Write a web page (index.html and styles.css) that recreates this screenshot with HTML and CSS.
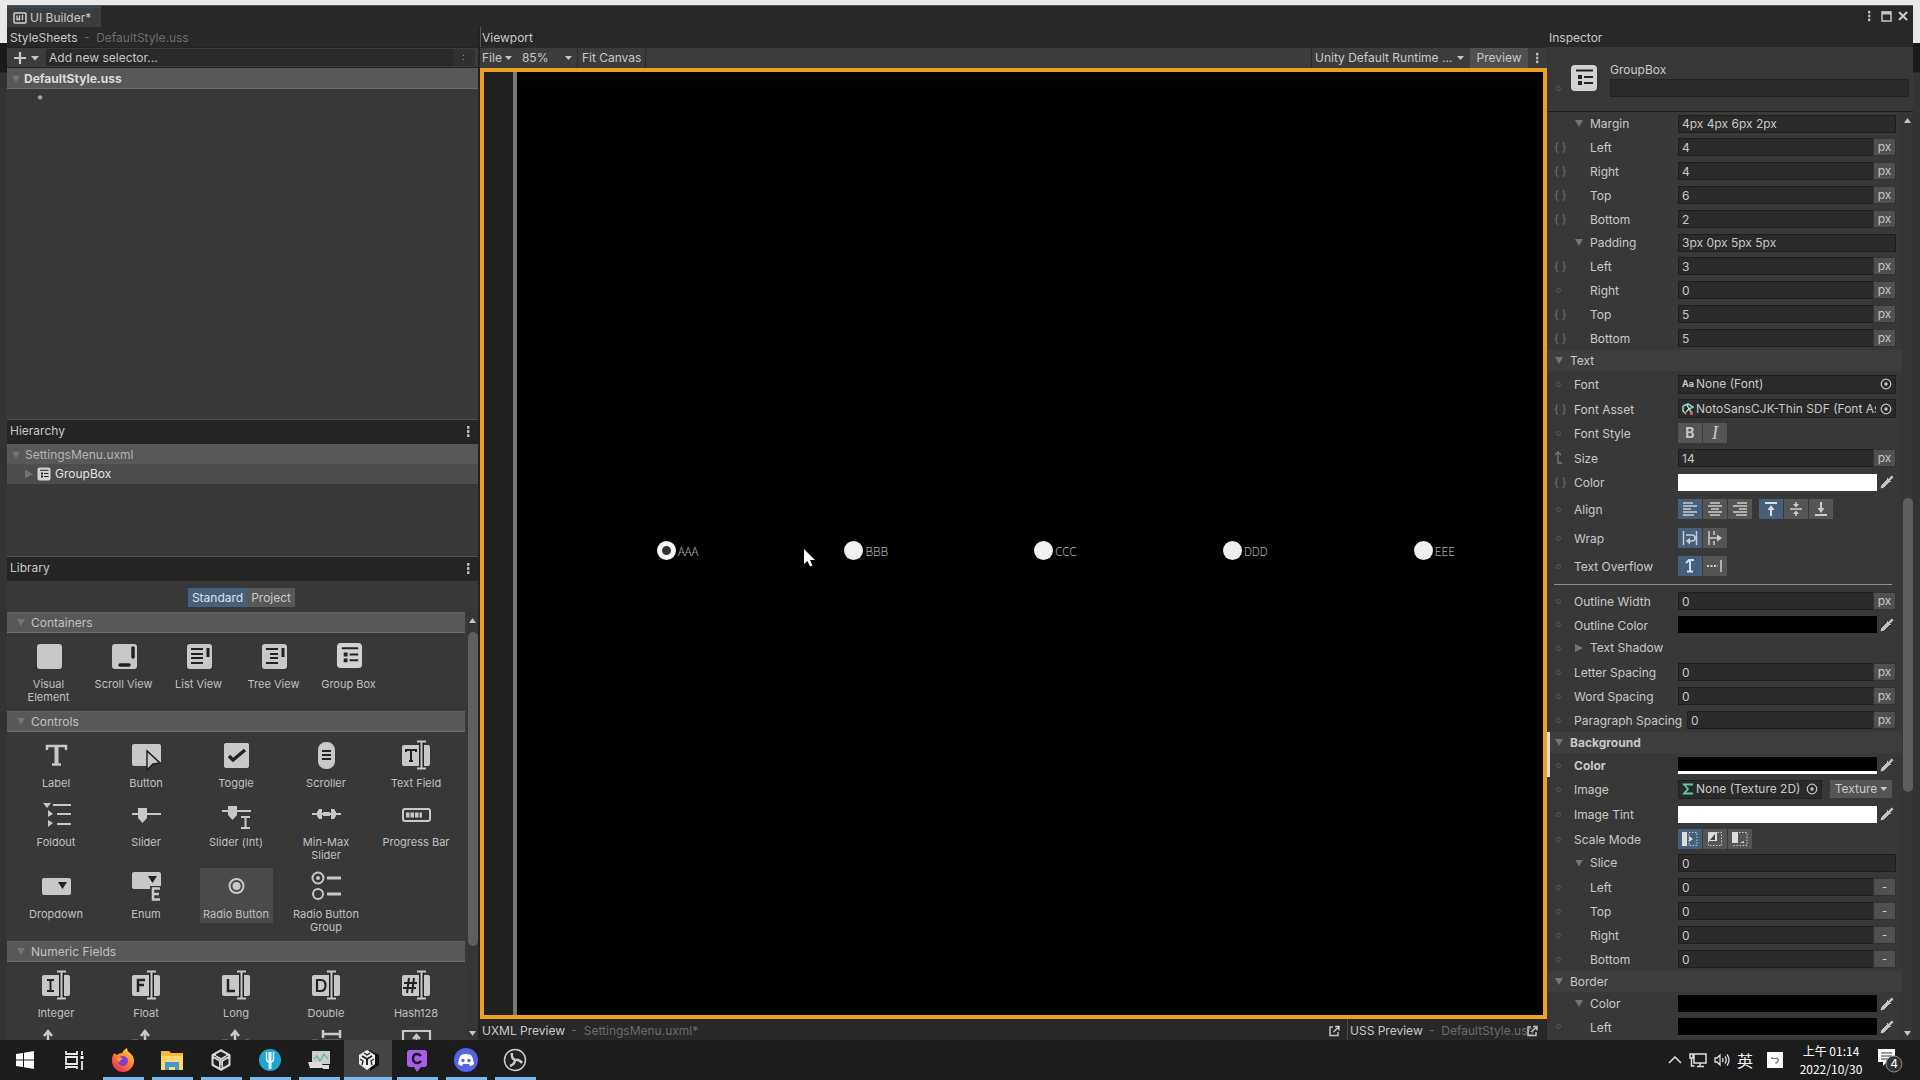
FILE: index.html
```
<!DOCTYPE html>
<html lang="en">
<head>
<meta charset="utf-8">
<title>UI Builder</title>
<link rel="stylesheet" href="styles.css">
</head>
<body>
<svg class="defs" aria-hidden="true">
  <symbol id="i-group" viewBox="0 0 28 28"><rect x="1" y="1" width="26" height="26" rx="4" fill="#d2d2d2"/><path d="M6 6.500h17M14 13h9M14 19h9" stroke="#222" stroke-width="2"/><path d="M8 11h4v4H8zM8 17h4v4H8z" fill="#222"/></symbol>
  <symbol id="i-field" viewBox="0 0 32 32"><path d="M4 6h15v21H4a2 2 0 0 1-2-2V8a2 2 0 0 1 2-2zM24 6h4a2 2 0 0 1 2 2v17a2 2 0 0 1-2 2h-4z" fill="#c8c8c8"/><path d="M21.500 2v28" stroke="#222" stroke-width="5"/><path d="M17 2.500h9M17 29.500h9M21.500 2v28" stroke="#c8c8c8" stroke-width="2" fill="none"/></symbol>
  <symbol id="i-dots" viewBox="0 0 4 14"><path d="M1 1h2.500v3H1zM1 5.500h2.500v3H1zM1 10h2.500v3H1z" fill="#c4c4c4"/></symbol>
  <symbol id="i-pick" viewBox="0 0 14 14"><path d="M1 13l1-3 6-6 2 2-6 6zM7 3l4 4M9 4l2-2.500a1 1 0 0 1 1.500 1.500L10 5z" fill="#c4c4c4" stroke="#c4c4c4"/></symbol>
  <symbol id="i-target" viewBox="0 0 12 12"><circle cx="6" cy="6" r="4.800" fill="none" stroke="#c4c4c4" stroke-width="1.200"/><circle cx="6" cy="6" r="1.700" fill="#c4c4c4"/></symbol>
  <symbol id="i-open" viewBox="0 0 12 12"><path d="M5 2H2v8.500h8V7M7 1.500h4V5.500M11 1.500L5.500 7" fill="none" stroke="#c4c4c4" stroke-width="1.500"/></symbol>
  <symbol id="i-unity" viewBox="0 0 24 24"><path d="M12 1l9.500 5.500v11L12 23l-9.500-5.500v-11z" fill="#d8d8d8"/><path d="M12 12V20M12 12l7-4M12 12L5 8M12 4l5 2.800-5 2.700-5-2.700zM5 11v5l4.500 2.600v-5zM19 11v5l-4.500 2.600v-5z" fill="#222" stroke="#222" stroke-width="1"/><path d="M12 11.500V17M12 11.500l5-3M12 11.500l-5-3" stroke="#ddd" stroke-width="1.300"/></symbol>
</svg>

<main class="window">
  <header class="tabbar">
    <button class="tab"><svg width="14" height="12" viewBox="0 0 14 12"><rect x="1" y="1" width="12" height="10" rx="1" fill="none" stroke="#d0d0d0" stroke-width="1.500"/><path d="M4 3.500v4h2.500v-4M9.500 3v5" fill="none" stroke="#d0d0d0" stroke-width="1.300"/></svg>UI Builder*</button>
    <div class="winbtns">
      <button aria-label="Menu"><svg width="4" height="12"><use href="#i-dots"/></svg></button>
      <button aria-label="Maximize"><svg width="11" height="11" viewBox="0 0 11 11"><path d="M1 1h9v9H1z" fill="none" stroke="#c4c4c4" stroke-width="1.500"/><path d="M1 2h9" stroke="#c4c4c4" stroke-width="3"/></svg></button>
      <button aria-label="Close"><svg width="10" height="10" viewBox="0 0 10 10"><path d="M1 1l8 8M9 1L1 9" stroke="#d0d0d0" stroke-width="1.800"/></svg></button>
    </div>
  </header>

  <div class="panes">
    <aside class="left">
      <h2 class="head">StyleSheets <span class="sub">-&nbsp; DefaultStyle.uss</span></h2>
      <div class="selbar">
        <button class="add" aria-label="Add"><svg width="26" height="14" viewBox="0 0 26 14"><path d="M7 1v12M1 7h12" stroke="#c8c8c8" stroke-width="2.200"/><path d="M18 5h8l-4 4.500z" fill="#c8c8c8"/></svg></button>
        <input class="selinput" aria-label="Selector" value="Add new selector...">
        <button class="selmore" aria-label="More"><svg width="2" height="8" viewBox="0 0 2 8"><path d="M0 1h1v1H0zM0 5h1v1H0z" fill="#888"/></svg></button>
      </div>
      <div class="sheets">
        <div class="row-file"><i class="tri"></i><b>DefaultStyle.uss</b></div>
        <div class="star">*</div>
      </div>
      <h2 class="head tall lined">Hierarchy <button class="more" aria-label="More"><svg width="4" height="13"><use href="#i-dots"/></svg></button></h2>
      <div class="tree">
        <div class="row-file faded"><i class="tri"></i>SettingsMenu.uxml</div>
        <div class="row-node"><i class="tri closed"></i><svg width="14" height="14"><use href="#i-group"/></svg>GroupBox</div>
      </div>
      <h2 class="head tall lined">Library <button class="more" aria-label="More"><svg width="4" height="13"><use href="#i-dots"/></svg></button></h2>
      <div class="modes"><button class="on">Standard</button><button>Project</button></div>
      <div class="library">
        <div class="libscroll">
          <h3 class="cat"><i class="tri"></i>Containers</h3>
          <div class="items tight">
            <div class="item"><svg viewBox="0 0 32 32"><rect x="4" y="4" width="25" height="25" rx="3" fill="#c8c8c8"/></svg><span>Visual Element</span></div>
            <div class="item"><svg viewBox="0 0 32 32"><rect x="4" y="4" width="25" height="25" rx="3" fill="#c8c8c8"/><path d="M25 8v9M12 25h9" stroke="#222" stroke-width="3.500" stroke-linecap="round"/></svg><span>Scroll View</span></div>
            <div class="item"><svg viewBox="0 0 32 32"><rect x="4" y="4" width="25" height="25" rx="3" fill="#c8c8c8"/><path d="M8 9h12M8 14h12M8 18h12M8 23h12" stroke="#222" stroke-width="2"/><path d="M25 8v9" stroke="#222" stroke-width="3"/></svg><span>List View</span></div>
            <div class="item"><svg viewBox="0 0 32 32"><rect x="4" y="4" width="25" height="25" rx="3" fill="#c8c8c8"/><path d="M8 9h12M12 14h8M12 18h8M8 23h12" stroke="#222" stroke-width="2"/><path d="M25 8v9" stroke="#222" stroke-width="3"/></svg><span>Tree View</span></div>
            <div class="item"><svg viewBox="0 0 32 32"><use href="#i-group" x="3" y="2" width="27" height="27"/></svg><span>Group Box</span></div>
          </div>
          <h3 class="cat"><i class="tri"></i>Controls</h3>
          <div class="items">
            <div class="item"><svg viewBox="0 0 32 32"><path d="M7 11V7h19v4M16.500 7v18M12 25.500h9" fill="none" stroke="#c8c8c8" stroke-width="2.500"/><path d="M16.500 6v20" stroke="#c8c8c8" stroke-width="4"/></svg><span>Label</span></div>
            <div class="item"><svg viewBox="0 0 32 32"><rect x="2" y="5" width="29" height="22" rx="2" fill="#c8c8c8"/><path d="M17 11l14 13v5H17z" fill="#383838"/><path d="M17 12l13 12-7 1-6 6z" fill="#c8c8c8" stroke="#222" stroke-width="1.500"/></svg><span>Button</span></div>
            <div class="item"><svg viewBox="0 0 32 32"><rect x="4" y="4" width="25" height="25" rx="2" fill="#c8c8c8"/><path d="M9 17l4 4L25 11" fill="none" stroke="#222" stroke-width="3.500"/></svg><span>Toggle</span></div>
            <div class="item"><svg viewBox="0 0 32 32"><rect x="8" y="3" width="17" height="27" rx="8" fill="#c8c8c8"/><path d="M12 12h9M12 16h9M12 20h9" stroke="#222" stroke-width="1.800"/></svg><span>Scroller</span></div>
            <div class="item"><svg viewBox="0 0 32 32"><use href="#i-field"/><path d="M6 13v-2h10v2M11 11v11M9 22h4" fill="none" stroke="#222" stroke-width="2"/></svg><span>Text Field</span></div>
            <div class="item"><svg viewBox="0 0 32 32"><path d="M3 5h8l-4 5zM8 12l5 4-5 3zM8 22l5 3-5 4z" fill="#c8c8c8"/><path d="M13 7h18M17 16h14M17 26h14" stroke="#c8c8c8" stroke-width="2"/></svg><span>Foldout</span></div>
            <div class="item"><svg viewBox="0 0 32 32"><path d="M2 16h29" stroke="#c8c8c8" stroke-width="2"/><path d="M8 10h9v10l-4.500 5L8 20z" fill="#c8c8c8"/></svg><span>Slider</span></div>
            <div class="item"><svg viewBox="0 0 32 32"><path d="M2 13h29" stroke="#c8c8c8" stroke-width="2"/><path d="M8 8h9v9l-4.500 5L8 17zM21 18h9v2h-3.500v9H30v2h-9v-2h3.500v-9H21z" fill="#c8c8c8"/></svg><span>Slider (Int)</span></div>
            <div class="item"><svg viewBox="0 0 32 32"><path d="M2 16h29" stroke="#c8c8c8" stroke-width="2"/><path d="M12 11v10h-3l-2-3v-4l2-3zM21 11v10h3l2-3v-4l-2-3zM13 14h7v4h-7z" fill="#c8c8c8"/></svg><span>Min-Max Slider</span></div>
            <div class="item"><svg viewBox="0 0 32 32"><rect x="3" y="11" width="27" height="12" rx="2" fill="none" stroke="#c8c8c8" stroke-width="2"/><path d="M6 17h16" stroke="#c8c8c8" stroke-width="5" stroke-dasharray="3.500 1"/></svg><span>Progress Bar</span></div>
            <div class="item"><svg viewBox="0 0 32 32"><rect x="2" y="8" width="29" height="17" rx="2" fill="#c8c8c8"/><path d="M18 12h9l-4.500 7z" fill="#222"/></svg><span>Dropdown</span></div>
            <div class="item"><svg viewBox="0 0 32 32"><rect x="2" y="2" width="29" height="17" rx="2" fill="#c8c8c8"/><path d="M18 6h9l-4.500 7z" fill="#222"/><path d="M20 16h12v15H20z" fill="#383838"/><path d="M30 18.500h-7v11h7M23 24h6" fill="none" stroke="#c8c8c8" stroke-width="2.500"/></svg><span>Enum</span></div>
            <div class="item sel"><svg viewBox="0 0 32 32"><circle cx="16.500" cy="16" r="7" fill="none" stroke="#c8c8c8" stroke-width="2"/><circle cx="16.500" cy="16" r="4" fill="#c8c8c8"/></svg><span>Radio Button</span></div>
            <div class="item"><svg viewBox="0 0 32 32"><circle cx="8" cy="8" r="5.500" fill="none" stroke="#c8c8c8" stroke-width="2"/><circle cx="8" cy="8" r="2" fill="#c8c8c8"/><circle cx="8" cy="24" r="5" fill="none" stroke="#c8c8c8" stroke-width="2"/><path d="M17 8h14M17 24h14" stroke="#c8c8c8" stroke-width="3"/></svg><span>Radio Button Group</span></div>
          </div>
          <h3 class="cat"><i class="tri"></i>Numeric Fields</h3>
          <div class="items">
            <div class="item"><svg viewBox="0 0 32 32"><use href="#i-field"/><path d="M7 11h7M7 22h7M10.500 11v11" stroke="#222" stroke-width="2"/></svg><span>Integer</span></div>
            <div class="item"><svg viewBox="0 0 32 32"><use href="#i-field"/><path d="M15 11H8v12M8 16h6" fill="none" stroke="#222" stroke-width="2.500"/></svg><span>Float</span></div>
            <div class="item"><svg viewBox="0 0 32 32"><use href="#i-field"/><path d="M8 10v12h7" fill="none" stroke="#222" stroke-width="2.500"/></svg><span>Long</span></div>
            <div class="item"><svg viewBox="0 0 32 32"><use href="#i-field"/><path d="M7 11h4q4.500 0 4.500 5.500T11 22H7z" fill="none" stroke="#222" stroke-width="2.200"/></svg><span>Double</span></div>
            <div class="item"><svg viewBox="0 0 32 32"><use href="#i-field"/><path d="M9 9L7 24M14 9l-2 15M4 14h13M3 19h13" stroke="#222" stroke-width="2"/></svg><span>Hash128</span></div>
            <div class="item"><svg viewBox="0 0 32 32"><path d="M8 3v14M4 8l4-5 4 5" fill="none" stroke="#c8c8c8" stroke-width="2.500"/></svg></div>
            <div class="item"><svg viewBox="0 0 32 32"><path d="M15 3v14M11 8l4-5 4 5M2 13h6" fill="none" stroke="#c8c8c8" stroke-width="2.500"/></svg></div>
            <div class="item"><svg viewBox="0 0 32 32"><path d="M15 3v14M11 8l4-5 4 5M2 13h6M25 13h4" fill="none" stroke="#c8c8c8" stroke-width="2.500"/></svg></div>
            <div class="item"><svg viewBox="0 0 32 32"><path d="M13 2v8M30 2v8M13 6h17M2 13h6M13 13h17v9H13z" fill="none" stroke="#c8c8c8" stroke-width="2.500"/></svg></div>
            <div class="item"><svg viewBox="0 0 32 32"><path d="M3 3h27v20H3zM16.500 17V8M13 11l3.500-4 3.500 4M8 13h2M23 13h2" fill="none" stroke="#c8c8c8" stroke-width="2.200"/></svg></div>
          </div>
        </div>
        <div class="bar"><i class="up"></i><i class="thumb lib"></i><i class="down"></i></div>
      </div>
    </aside>

    <section class="center">
      <h2 class="head">Viewport</h2>
      <div class="toolbar">
        <button>File<i class="dd"></i></button>
        <button class="zoom">85%<i class="dd"></i></button>
        <button class="fit">Fit Canvas</button>
        <button class="theme">Unity Default Runtime ...<i class="dd"></i></button>
        <button class="preview">Preview</button>
        <button class="tmore" aria-label="More"><svg width="4" height="12"><use href="#i-dots"/></svg></button>
      </div>
      <div class="viewport">
        <div class="canvas">
          <label><input type="radio" name="g" checked>AAA</label>
          <label><input type="radio" name="g">BBB</label>
          <label><input type="radio" name="g">CCC</label>
          <label><input type="radio" name="g">DDD</label>
          <label><input type="radio" name="g">EEE</label>
        </div>
        <svg class="cursor" width="12" height="18" viewBox="0 0 12 18"><path d="M0 0v15l3.500-3 2.500 5.500 2.500-1L6 11h5z" fill="#fff"/></svg>
      </div>
      <div class="previews">
        <div class="pv grow">UXML Preview <span class="sub">-&nbsp; SettingsMenu.uxml*</span><button aria-label="Open"><svg width="12" height="12"><use href="#i-open"/></svg></button></div>
        <div class="pv uss">USS Preview <span class="sub">-&nbsp; DefaultStyle.uss</span><button aria-label="Open"><svg width="12" height="12"><use href="#i-open"/></svg></button></div>
      </div>
    </section>

    <aside class="inspector">
      <h2 class="head">Inspector</h2>
      <div class="ident">
        <i class="dot"></i>
        <svg width="28" height="28"><use href="#i-group"/></svg>
        <div class="idcol"><label for="nm">GroupBox</label><input id="nm" value=""></div>
      </div>
      <div class="inspbody">
        <div class="props">
          <div class="row s23 n2"><i class="m"></i><i class="tri"></i><label for="f1">Margin</label><input class="fld" id="f1" value="4px 4px 6px 2px"></div>
          <div class="row n2"><i class="m">{ }</i><label for="f2">Left</label><input class="fld" id="f2" value="4"><button class="unit">px</button></div>
          <div class="row n2"><i class="m">{ }</i><label for="f3">Right</label><input class="fld" id="f3" value="4"><button class="unit">px</button></div>
          <div class="row n2"><i class="m">{ }</i><label for="f4">Top</label><input class="fld" id="f4" value="6"><button class="unit">px</button></div>
          <div class="row n2"><i class="m">{ }</i><label for="f5">Bottom</label><input class="fld" id="f5" value="2"><button class="unit">px</button></div>
          <div class="row s23 n2"><i class="m"></i><i class="tri"></i><label for="f6">Padding</label><input class="fld" id="f6" value="3px 0px 5px 5px"></div>
          <div class="row n2"><i class="m">{ }</i><label for="f7">Left</label><input class="fld" id="f7" value="3"><button class="unit">px</button></div>
          <div class="row n2"><i class="m o"></i><label for="f8">Right</label><input class="fld" id="f8" value="0"><button class="unit">px</button></div>
          <div class="row n2"><i class="m">{ }</i><label for="f9">Top</label><input class="fld" id="f9" value="5"><button class="unit">px</button></div>
          <div class="row n2"><i class="m">{ }</i><label for="f10">Bottom</label><input class="fld" id="f10" value="5"><button class="unit">px</button></div>
          <h3 class="sec"><i class="tri"></i>Text</h3>
          <div class="row s26"><i class="m o"></i><label for="f11">Font</label><div class="obj"><b class="aa">Aa</b><input id="f11" value="None (Font)"><button aria-label="Pick"><svg width="12" height="12"><use href="#i-target"/></svg></button></div></div>
          <div class="row s23"><i class="m">{ }</i><label for="f12">Font Asset</label><div class="obj"><svg width="12" height="12" viewBox="0 0 12 12"><path d="M1 3l5-2 5 3-4 2 3 4M1 3v5l3 3" fill="none" stroke="#7fd6c0" stroke-width="1.600"/><path d="M5 2l2 4-3 3" fill="none" stroke="#ddd" stroke-width="1.200"/><path d="M8 9h3v3H8z" fill="#e05050"/></svg><input id="f12" value="NotoSansCJK-Thin SDF (Font Asset)"><button aria-label="Pick"><svg width="12" height="12"><use href="#i-target"/></svg></button></div></div>
          <div class="row s26"><i class="m o"></i><span class="lb">Font Style</span><div class="seg"><button class="bold">B</button><button class="ital">I</button></div></div>
          <div class="row"><i class="m"><svg width="9" height="14" viewBox="0 0 9 14"><path d="M1 4l3-3 3 3M4 1v11h4" fill="none" stroke="#777" stroke-width="1.300"/></svg></i><label for="f13">Size</label><input class="fld" id="f13" value="14"><button class="unit">px</button></div>
          <div class="row"><i class="m">{ }</i><span class="lb">Color</span><button class="color white" aria-label="Color"></button><button class="eye" aria-label="Pick color"><svg width="14" height="14"><use href="#i-pick"/></svg></button></div>
          <div class="row s30"><i class="m o"></i><span class="lb">Align</span>
            <div class="seg">
              <button class="on" aria-label="Left"><svg viewBox="0 0 16 16"><path d="M1 2h10M1 5h14M1 8h8M1 11h14M1 14h11" stroke="#ccc" stroke-width="1.300"/></svg></button>
              <button aria-label="Center"><svg viewBox="0 0 16 16"><path d="M3 2h10M1 5h14M4 8h8M1 11h14M3 14h10" stroke="#ccc" stroke-width="1.300"/></svg></button>
              <button aria-label="Right"><svg viewBox="0 0 16 16"><path d="M5 2h10M1 5h14M7 8h8M1 11h14M4 14h11" stroke="#ccc" stroke-width="1.300"/></svg></button>
            </div>
            <div class="seg second">
              <button class="on" aria-label="Top"><svg viewBox="0 0 16 16"><path d="M2 2h12M8 15V7" stroke="#ddd" stroke-width="2"/><path d="M4.500 9L8 4l3.500 5z" fill="#ddd"/></svg></button>
              <button aria-label="Middle"><svg viewBox="0 0 16 16"><path d="M2 8h12M8 1v3M8 12v3" stroke="#ccc" stroke-width="1.500"/><path d="M5 3h6L8 6.500zM5 13h6L8 9.500z" fill="#ccc"/></svg></button>
              <button aria-label="Bottom"><svg viewBox="0 0 16 16"><path d="M2 14h12M8 1v7" stroke="#ccc" stroke-width="2"/><path d="M4.500 7L8 12l3.500-5z" fill="#ccc"/></svg></button>
            </div>
          </div>
          <div class="row s28"><i class="m o"></i><span class="lb">Wrap</span><div class="seg">
            <button class="on" aria-label="Wrap"><svg viewBox="0 0 16 16"><path d="M1.500 1v14M14.500 1v14M4 5h6a2.500 2.500 0 0 1 0 6H6" fill="none" stroke="#ccc" stroke-width="1.500"/><path d="M8 7.500v7L4 11z" fill="#ccc"/></svg></button>
            <button aria-label="No wrap"><svg viewBox="0 0 16 16"><path d="M2 1v14M7 1v4M7 11v4M3 8h9" stroke="#ccc" stroke-width="1.500"/><path d="M10 4.500L15 8l-5 3.500z" fill="#ccc"/></svg></button></div></div>
          <div class="row s28"><i class="m o"></i><span class="lb">Text Overflow</span><div class="seg">
            <button class="on" aria-label="Clip"><svg viewBox="0 0 16 16"><path d="M4 5l3-3h5M8 2v11M5 13.500h6" fill="none" stroke="#c8e0f0" stroke-width="2"/></svg></button>
            <button aria-label="Ellipsis"><svg viewBox="0 0 16 16"><path d="M0 8h11" stroke="#ccc" stroke-width="2" stroke-dasharray="2 1.500"/><path d="M14 2v12" stroke="#ccc" stroke-width="1.500"/></svg></button></div></div>
          <hr>
          <div class="row"><i class="m o"></i><label for="f14">Outline Width</label><input class="fld" id="f14" value="0"><button class="unit">px</button></div>
          <div class="row s23"><i class="m o"></i><span class="lb">Outline Color</span><button class="color" aria-label="Outline color"></button><button class="eye" aria-label="Pick color"><svg width="14" height="14"><use href="#i-pick"/></svg></button></div>
          <div class="row n2 flat"><i class="m o"></i><i class="tri closed"></i><span class="lb">Text Shadow</span></div>
          <div class="row"><i class="m o"></i><label for="f15">Letter Spacing</label><input class="fld" id="f15" value="0"><button class="unit">px</button></div>
          <div class="row"><i class="m o"></i><label for="f16">Word Spacing</label><input class="fld" id="f16" value="0"><button class="unit">px</button></div>
          <div class="row long"><i class="m o"></i><label for="f17">Paragraph Spacing</label><input class="fld" id="f17" value="0"><button class="unit">px</button></div>
          <div class="changed">
            <h3 class="sec"><i class="tri"></i><b>Background</b></h3>
            <div class="row"><i class="m o"></i><b class="lb">Color</b><button class="color alpha" aria-label="Background color"></button><button class="eye" aria-label="Pick color"><svg width="14" height="14"><use href="#i-pick"/></svg></button></div>
          </div>
          <div class="row"><i class="m o"></i><label for="f18">Image</label><div class="obj short"><svg width="12" height="12" viewBox="0 0 12 12"><path d="M11 1.500H2l4 4.500-4 4.500h9" fill="none" stroke="#5fc9a0" stroke-width="1.800"/></svg><input id="f18" value="None (Texture 2D)"><button aria-label="Pick"><svg width="12" height="12"><use href="#i-target"/></svg></button></div><button class="texture">Texture<i class="dd"></i></button></div>
          <div class="row s26"><i class="m o"></i><span class="lb">Image Tint</span><button class="color white" aria-label="Tint"></button><button class="eye" aria-label="Pick color"><svg width="14" height="14"><use href="#i-pick"/></svg></button></div>
          <div class="row"><i class="m o"></i><span class="lb">Scale Mode</span><div class="seg">
            <button class="on" aria-label="Stretch"><svg viewBox="0 0 16 16"><path d="M0 1h5v14H0z" fill="#ddd"/><path d="M7 1.500h8v13H7z" fill="none" stroke="#ccc" stroke-dasharray="1.500 1.500"/><path d="M7 5l4 3-4 3z" fill="#ddd"/></svg></button>
            <button aria-label="Crop"><svg viewBox="0 0 16 16"><path d="M1 1h9v9H1z" fill="#ddd"/><path d="M3 9l5-6v6z" fill="#444"/><path d="M1.500 1.500h13v13h-13z" fill="none" stroke="#ccc" stroke-dasharray="1.500 1.500"/></svg></button>
            <button aria-label="Fit"><svg viewBox="0 0 16 16"><path d="M0 1h6v11H0z" fill="#ddd"/><path d="M7 1.500h8v13H1" fill="none" stroke="#ccc" stroke-dasharray="1.500 1.500"/><path d="M8 12h4v-2z" fill="#ddd"/></svg></button></div></div>
          <div class="row n2"><i class="m"></i><i class="tri"></i><label for="f19">Slice</label><input class="fld" id="f19" value="0"></div>
          <div class="row n2"><i class="m o"></i><label for="f20">Left</label><input class="fld" id="f20" value="0"><button class="unit">-</button></div>
          <div class="row n2"><i class="m o"></i><label for="f21">Top</label><input class="fld" id="f21" value="0"><button class="unit">-</button></div>
          <div class="row n2"><i class="m o"></i><label for="f22">Right</label><input class="fld" id="f22" value="0"><button class="unit">-</button></div>
          <div class="row n2"><i class="m o"></i><label for="f23">Bottom</label><input class="fld" id="f23" value="0"><button class="unit">-</button></div>
          <h3 class="sec"><i class="tri"></i>Border</h3>
          <div class="row s23 n2"><i class="m"></i><i class="tri"></i><span class="lb">Color</span><button class="color" aria-label="Border color"></button><button class="eye" aria-label="Pick color"><svg width="14" height="14"><use href="#i-pick"/></svg></button></div>
          <div class="row s23 n2"><i class="m o"></i><span class="lb">Left</span><button class="color" aria-label="Border left color"></button><button class="eye" aria-label="Pick color"><svg width="14" height="14"><use href="#i-pick"/></svg></button></div>
        </div>
        <div class="bar"><i class="up"></i><i class="thumb insp"></i><i class="down"></i></div>
      </div>
    </aside>
  </div>
</main>

<footer class="taskbar">
  <button class="app" aria-label="Start"><svg viewBox="0 0 24 24"><path d="M3 6l7-1v6.500H3zM11 4.800L21 3v8.500H11zM3 12.500h7V19l-7-1zM11 12.500h10V21l-10-1.800z" fill="#fff"/></svg></button>
  <button class="app" aria-label="Task view"><svg viewBox="0 0 24 24"><path d="M4 9h11v7H4zM4 3v3h11V3M4 21v-2h11v2M20 3v4M20 13v9" fill="none" stroke="#e8e8e8" stroke-width="1.800"/><path d="M18.500 8h3v3h-3z" fill="#fff"/></svg></button>
  <button class="app run" aria-label="Firefox"><svg viewBox="0 0 24 24"><defs><linearGradient id="ff" x1="1" y1="0" x2="0.300" y2="1"><stop offset="0" stop-color="#ffe04a"/><stop offset=".5" stop-color="#ff8a2a"/><stop offset="1" stop-color="#f0305a"/></linearGradient></defs><path d="M3 5l3 2q2-2 5-2 2-4 5-5 0 3 3 5 4 3 4 8A11 11 0 0 1 1 13Q1 8 3 5z" fill="url(#ff)"/><circle cx="12" cy="13" r="5" fill="#7a3fd0"/><path d="M6 10q3-2 6 1-3 0-3 3-3-1-3-4z" fill="#ff9a2e"/></svg></button>
  <button class="app run" aria-label="Files"><svg viewBox="0 0 24 24"><path d="M1 3h8l2 2h12v17H1z" fill="#f2b93b"/><path d="M1 8h22v14H1z" fill="#ffd76a"/><path d="M5 22v-8h14v8h-4v-3H9v3z" fill="#3f9bd8"/></svg></button>
  <button class="app run" aria-label="Unity Hub"><svg viewBox="0 0 24 24"><use href="#i-unity"/></svg></button>
  <button class="app run" aria-label="Fork"><svg viewBox="0 0 24 24"><circle cx="12" cy="12" r="11" fill="#1fa5cf"/><path d="M8.500 4v7q0 3 3.500 3t3.500-3V4" fill="none" stroke="#e8f6fb" stroke-width="1.500"/><path d="M12 4v17" stroke="#e8f6fb" stroke-width="3"/></svg></button>
  <button class="app run" aria-label="Monitor"><svg viewBox="0 0 24 24"><path d="M5 3h18v13H5z" fill="#c9cdd0"/><path d="M7 11l3-3 3 5 4-7 4 5" fill="none" stroke="#72b8a0" stroke-width="1.500"/><path d="M1 14h13l3 6H3zM15 17h7v4h-6z" fill="#dcdcdc"/></svg></button>
  <button class="app run active" aria-label="Unity"><svg viewBox="0 0 24 24"><path d="M13 2l10 5v10l-9 6z" fill="#111"/><path d="M11 2l8 5v9l-8 6-8-6V7z" fill="#eee"/><path d="M11 11v6M11 11l5-3M11 11L6 8" stroke="#222" stroke-width="2"/><path d="M8 5l3 2 3-2M4 11l3 2-1 4M18 11l-3 2 1 4" fill="none" stroke="#222" stroke-width="1.300"/></svg></button>
  <button class="app run" aria-label="Clip"><svg viewBox="0 0 24 24"><path d="M5 2h14a3 3 0 0 1 3 3v11a3 3 0 0 1-3 3h-3l-4 5-3-5H5a3 3 0 0 1-3-3V5a3 3 0 0 1 3-3z" fill="#a75fe8"/><path d="M16 8q-1.500-2-4-2-4 .3-4 4.500t4 4.500q2.500 0 4-2" fill="none" stroke="#1a1030" stroke-width="2.500"/></svg></button>
  <button class="app run" aria-label="Discord"><svg viewBox="0 0 24 24"><circle cx="12" cy="12" r="12" fill="#5562ea"/><path d="M7 7q5-2 10 0 3 4 3 9-2 2-4 2l-1-2H9l-1 2q-2 0-4-2 0-5 3-9z" fill="#fff"/><circle cx="9" cy="12.500" r="1.700" fill="#5562ea"/><circle cx="15" cy="12.500" r="1.700" fill="#5562ea"/></svg></button>
  <button class="app run" aria-label="OBS"><svg viewBox="0 0 24 24"><circle cx="12" cy="12" r="10.500" fill="#222" stroke="#ccc" stroke-width="1.500"/><path d="M12 12q-4-2-3-7M12 12q4-1 7 3M12 12q0 4-5 6" fill="none" stroke="#ccc" stroke-width="2.500"/></svg></button>
  <div class="tray">
    <button aria-label="Show hidden icons"><svg width="14" height="8" viewBox="0 0 14 8"><path d="M1 7l6-6 6 6" fill="none" stroke="#ddd" stroke-width="1.500"/></svg></button>
    <button aria-label="Network"><svg width="18" height="16" viewBox="0 0 18 16"><path d="M5 2h12v9H5zM8 14.500h7M11 11v3M1 2h3v4H1zM2.500 6v8h3" fill="none" stroke="#ddd" stroke-width="1.500"/></svg></button>
    <button aria-label="Volume"><svg width="16" height="14" viewBox="0 0 16 14"><path d="M1 5h2l3-3v10L3 9H1zM8.500 5q1 2 0 4M11 3.500q2.500 3.500 0 7M13 1.500q4 5.500 0 11" fill="none" stroke="#ddd" stroke-width="1.300"/></svg></button>
    <button class="ime">英</button>
    <button class="imebox" aria-label="Bopomofo"><svg width="16" height="16" viewBox="0 0 16 16"><rect width="16" height="16" fill="#fff"/><path d="M5 5v2M5 6.500h4M9 6q3 0 2 3l-1 2H8" fill="none" stroke="#666" stroke-width="1.200"/></svg></button>
    <button class="clock">上午 01:14<br>2022/10/30</button>
    <button class="notif" aria-label="Notifications"><svg width="26" height="26" viewBox="0 0 26 26"><path d="M1 2h17v13h-8l-4 4v-4H1z" fill="#fff"/><path d="M4 6h11M4 9h11M4 12h8" stroke="#333" stroke-width="1.200"/><circle cx="17" cy="17" r="8" fill="#333" stroke="#888"/></svg><span>4</span></button>
  </div>
</footer>
</body>
</html>
```
FILE: styles.css
```
* { box-sizing: border-box; }
body {
  margin: 0;
  height: 100vh;
  display: flex;
  flex-direction: column;
  overflow: hidden;
  font: 12px/16px Inter, "Liberation Sans", sans-serif;
  color: #c8c8c8;
  background: linear-gradient(#e8e8e8 43px, #1a1a1a 43px, #1a1a1a 72px, #333 73px);
}
button, input { font: inherit; color: inherit; background: none; border: 0; margin: 0; padding: 0; border-radius: 0; }
input { min-width: 0; outline: 0; }
h2, h3 { margin: 0; font: inherit; }
svg { display: block; flex: none; }
i { font-style: normal; }
.defs { position: absolute; width: 0; height: 0; }

.window {
  flex: 1;
  min-height: 0;
  margin: 5px 7px 0;
  display: flex;
  flex-direction: column;
  background: #383838;
  border-top: 1px solid #555;
}
.tabbar { height: 21px; flex: none; display: flex; justify-content: space-between; background: #282828; }
.tab { display: flex; align-items: center; gap: 3px; width: 94px; padding: 1px 0 0 6px; background: #3c3c3c; border-top: 2px solid #34485c; }
.winbtns { display: flex; align-items: center; gap: 10px; padding: 0 5px 1px 0; }
.winbtns button:nth-child(3) { margin-left: -4px; }

.panes { flex: 1; min-height: 0; display: grid; grid-template-columns: 473px minmax(0, 1fr) 366px; }
.left, .center, .inspector { display: flex; flex-direction: column; min-width: 0; min-height: 0; }
.left { border-right: 2px solid #222; }

.head { flex: none; display: flex; align-items: center; height: 20px; padding: 2px 0 0 3px; background: #282828; white-space: pre; }
.head.tall { justify-content: space-between; padding: 0 8px 2px 3px; background: #252525; }
.head.lined { border-top: 1px solid #505050; height: 25px; }
.sub { color: #6c6c6c; margin-left: 3px; }
.center .head { border-left: 1px solid #555; padding-left: 1px; }

.selbar { flex: none; display: flex; height: 21px; padding: 1px 3px 1px 0; background: #3c3c3c; border-top: 1px solid #222; border-bottom: 1px solid #222; }
.add { width: 39px; padding-left: 6px; }
.selinput { flex: 1; padding-left: 3px; background: #2a2a2a; }
.selmore { width: 22px; padding-left: 10px; background: #303030; }
.row-file { display: flex; align-items: center; height: 21px; padding: 2px 0 0 5px; gap: 4px; background: #585858; border-bottom: 1px solid #6a6a6a; color: #dcdcdc; }
.row-file.faded { color: #b4b4b4; gap: 5px; height: 20px; border-bottom: 0; }
.row-node { display: flex; align-items: center; height: 20px; padding-left: 18px; gap: 4px; background: #4c4c4c; color: #e4e4e4; }
.tri { flex: none; width: 8px; height: 7px; background: #747474; clip-path: polygon(0 0, 100% 0, 50% 100%); }
.tri.closed { height: 8px; clip-path: polygon(0 0, 100% 50%, 0 100%); }
.sheets { height: 351px; flex: none; }
.star { padding: 3px 0 0 30px; }
.tree { height: 112px; flex: none; }
.modes { flex: none; display: flex; justify-content: center; padding: 7px 2px 5px 0; }
.modes button { height: 19px; padding: 0 4px; background: #585858; }
.modes .on { background: #46607c; color: #e0e0e0; }
.library { flex: 1; min-height: 0; display: flex; gap: 2px; }
.libscroll { flex: 1; min-width: 0; overflow: hidden; color: #c0c0c0; }
.cat { display: flex; align-items: center; gap: 6px; height: 21px; padding-left: 10px; background: #585858; border-top: 1px solid #606060; border-bottom: 1px solid #707070; }
.items { display: grid; grid-template-columns: repeat(5, 90px); justify-items: center; align-items: start; row-gap: 4px; padding: 5px 0 5px 4px; }
.items.tight { grid-template-columns: repeat(5, 75px); }
.item { width: 73px; padding: 2px 0; display: flex; flex-direction: column; align-items: center; font-size: 11px; line-height: 13px; text-align: center; }
.item svg { width: 32px; height: 32px; margin-bottom: 6px; }
.item.sel { background: #4a4a4a; }
.bar { flex: none; width: 11px; padding: 6px 0 4px; display: flex; flex-direction: column; align-items: center; background: #363636; }
.up, .down { width: 7px; height: 5px; background: #c4c4c4; clip-path: polygon(50% 0, 100% 100%, 0 100%); }
.down { margin-top: auto; clip-path: polygon(0 0, 100% 0, 50% 100%); }
.thumb { width: 10px; border-radius: 5px; background: #5e5e5e; }
.thumb.lib { height: 75%; margin-top: 9px; }
.thumb.insp { height: 32%; margin-top: 375px; }

.toolbar { flex: none; display: flex; height: 21px; background: #3c3c3c; border-top: 1px solid #2a2a2a; }
.toolbar button { display: flex; align-items: center; padding: 0 4px; gap: 4px; white-space: nowrap; }
.toolbar button:first-child { padding: 0 4px 0 2px; gap: 3px; }
.dd { flex: none; width: 7px; height: 4px; background: #c8c8c8; clip-path: polygon(0 0, 100% 0, 50% 100%); }
.toolbar .zoom { width: 61px; justify-content: space-between; padding: 0 5px 0 6px; }
.toolbar .fit { padding: 0 4px; border-left: 1px solid #2a2a2a; border-right: 1px solid #2a2a2a; }
.toolbar .theme { margin-left: auto; width: 159px; justify-content: space-between; padding: 0 6px 0 3px; border-left: 1px solid #2a2a2a; }
.toolbar .preview { width: 58px; justify-content: center; background: #505050; }
.toolbar .tmore { width: 19px; padding-left: 7px; }
.viewport { flex: 1; min-height: 0; position: relative; display: flex; padding-left: 29px; border: 4px solid #f0a020; background: #202020; }
.canvas { flex: 1; display: flex; align-items: center; justify-content: space-around; padding: 14px 15px 0 67px; border-left: 4px solid #777; background: #000; font: 12px/16px "Noto Sans CJK SC", sans-serif; font-weight: 100; color: #f0f0f0; }
.canvas label { display: flex; align-items: center; gap: 2px; }
.canvas input { appearance: none; width: 19px; height: 19px; border-radius: 50%; background: #f0f0f0; }
.canvas input:checked { border: 5px solid #f8f8f8; background: #333; }
.cursor { position: absolute; left: 320px; top: calc(50% + 5px); }
.previews { flex: none; display: flex; height: 21px; background: #282828; }
.pv { display: flex; align-items: center; padding: 3px 0 0 2px; white-space: pre; overflow: hidden; }
.pv.grow { flex: 1; }
.pv.uss { width: 200px; padding-left: 2px; border-left: 1px solid #4a4a4a; }
.pv button { margin-left: auto; padding-right: 7px; }
.pv.uss button { margin-left: -8px; }

.inspector .head { padding-left: 2px; }
.ident { flex: none; height: 65px; display: flex; align-items: flex-start; padding: 17px 4px 0 9px; border-bottom: 1px solid #1e1e1e; }
.ident > svg { margin-left: 9px; }
.dot { width: 5px; height: 5px; margin-top: 22px; border: 1px solid #5a5a5a; border-radius: 50%; }
.idcol { flex: 1; padding-left: 12px; display: flex; flex-direction: column; min-width: 0; }
.idcol label { height: 15px; line-height: 11px; }
.idcol input { height: 18px; background: #2a2a2a; border: 1px solid #222; }
.inspbody { flex: 1; min-height: 0; display: flex; }
.props { flex: 1; min-width: 0; overflow: hidden; }
.row { position: relative; display: flex; align-items: center; height: 24px; padding: 0 6px 0 27px; }
.s23 { height: 23px; }
.s26 { height: 26px; }
.s28 { height: 28px; }
.s30 { height: 30px; }
.row label, .row .lb { flex: none; width: 104px; padding-top: 2px; white-space: nowrap; }
.row.n2 { padding-left: 43px; }
.row.n2 label, .row.n2 .lb { width: 88px; }
.row .tri { margin: 0 7px 0 -15px; }
.row.n2 .tri ~ label, .row.n2 .tri ~ .lb { padding-top: 0; }
.row.long label { width: 113px; }
.m { position: absolute; left: 7px; color: #777; font-size: 11px; }
.m.o { left: 9px; width: 5px; height: 5px; border: 1px solid #5a5a5a; border-radius: 50%; }
.fld { flex: 1; height: 18px; padding-left: 3px; background: #2a2a2a; border: 1px solid #1e1e1e; }
.unit { width: 23px; height: 18px; margin-left: -1px; line-height: 14px; background: #505050; border: 1px solid #333; }
.obj { flex: 1; min-width: 0; display: flex; align-items: center; height: 19px; padding: 0 3px; gap: 2px; background: #2a2a2a; border: 1px solid #202020; }
.obj input { flex: 1; }
.obj button { padding-left: 2px; }
.aa { font-size: 9px; width: 12px; }
.texture { width: 62px; height: 18px; margin: 0 4px 0 8px; display: flex; align-items: center; justify-content: center; gap: 3px; background: #555; }
.seg { display: flex; gap: 1px; }
.seg.second { margin-left: 7px; }
.seg button { width: 24px; height: 20px; display: flex; align-items: center; justify-content: center; background: #555; }
.seg .on { background: #46607c; }
.seg svg { width: 16px; height: 16px; }
.seg .bold { font-weight: 700; font-size: 14px; }
.seg .ital { font: italic 18px/20px "Liberation Serif", serif; }
.color { flex: 1; height: 17px; background: #000; }
.color.white { background: #fff; }
.color.alpha { border-bottom: 3px solid #fff; }
.eye { width: 19px; padding-left: 3px; }
.sec { display: flex; align-items: center; gap: 7px; height: 21px; padding-left: 8px; background: #3e3e3e; }
hr { height: 1px; margin: 4px 10px 4px 7px; border: 0; background: #909090; }
.changed { box-shadow: inset 3px 0 #ddd; }
.changed .sec { margin-left: 3px; padding-left: 5px; }

.taskbar { flex: none; height: 40px; display: flex; gap: 1px; padding-left: 1px; background: #1c1c1c; color: #fff; }
.app { width: 48px; display: flex; align-items: center; justify-content: center; border-bottom: 3px solid transparent; padding-top: 3px; }
.app svg { width: 24px; height: 24px; }
.app.run { background: linear-gradient(#76b9ed, #76b9ed) center bottom / 41px 3px no-repeat border-box; }
.app.active { background: linear-gradient(#76b9ed, #76b9ed) bottom / 100% 3px no-repeat border-box, #444; }
.tray { margin-left: auto; display: flex; align-items: center; gap: 7px; padding-right: 17px; }
.ime { font: 16px/20px "Noto Sans CJK TC", sans-serif; }
.imebox { margin: 0 6px 0 7px; }
.clock { width: 70px; font: 12px/18px "Noto Sans CJK TC", sans-serif; text-align: center; }
.notif { position: relative; margin-left: 4px; }
.notif span { position: absolute; right: 5px; bottom: 1px; font-size: 12px; }
```
